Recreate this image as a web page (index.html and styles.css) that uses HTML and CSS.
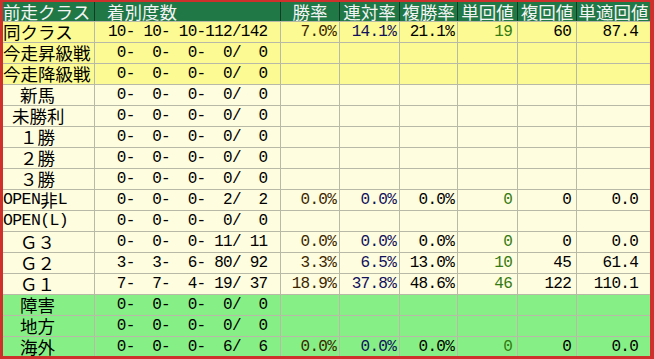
FILE: index.html
```html
<!DOCTYPE html>
<html lang="ja">
<head>
<meta charset="utf-8">
<title>前走クラス</title>
<link rel="stylesheet" href="styles.css">
</head>
<body>
<div class="frame">
  <div class="row head">
    <div class="cell lab jp">前走クラス</div>
    <div class="cell cnt jp">着別度数</div>
    <div class="cell hc jp">勝率</div>
    <div class="cell hc jp">連対率</div>
    <div class="cell hc jp">複勝率</div>
    <div class="cell hc jp">単回値</div>
    <div class="cell hc jp">複回値</div>
    <div class="cell hc jp">単適回値</div>
  </div>

  <div class="row yel">
    <div class="cell lab jp">同クラス</div>
    <div class="cell cnt num">10- 10- 10-112/142</div>
    <div class="cell pct c-win num">7.0%</div>
    <div class="cell pct c-ren num">14.1%</div>
    <div class="cell pct num">21.1%</div>
    <div class="cell rv c-tan num">19</div>
    <div class="cell rv num">60</div>
    <div class="cell rl num">87.4</div>
  </div>
  <div class="row yel">
    <div class="cell lab jp">今走昇級戦</div>
    <div class="cell cnt num"> 0-  0-  0-  0/  0</div>
    <div class="cell pct"></div><div class="cell pct"></div><div class="cell pct"></div>
    <div class="cell rv"></div><div class="cell rv"></div><div class="cell rl"></div>
  </div>
  <div class="row yel">
    <div class="cell lab jp">今走降級戦</div>
    <div class="cell cnt num"> 0-  0-  0-  0/  0</div>
    <div class="cell pct"></div><div class="cell pct"></div><div class="cell pct"></div>
    <div class="cell rv"></div><div class="cell rv"></div><div class="cell rl"></div>
  </div>

  <div class="row crm">
    <div class="cell lab jp ind-f">新馬</div>
    <div class="cell cnt num"> 0-  0-  0-  0/  0</div>
    <div class="cell pct"></div><div class="cell pct"></div><div class="cell pct"></div>
    <div class="cell rv"></div><div class="cell rv"></div><div class="cell rl"></div>
  </div>
  <div class="row crm">
    <div class="cell lab jp ind-h">未勝利</div>
    <div class="cell cnt num"> 0-  0-  0-  0/  0</div>
    <div class="cell pct"></div><div class="cell pct"></div><div class="cell pct"></div>
    <div class="cell rv"></div><div class="cell rv"></div><div class="cell rl"></div>
  </div>
  <div class="row crm">
    <div class="cell lab jp ind-f">１勝</div>
    <div class="cell cnt num"> 0-  0-  0-  0/  0</div>
    <div class="cell pct"></div><div class="cell pct"></div><div class="cell pct"></div>
    <div class="cell rv"></div><div class="cell rv"></div><div class="cell rl"></div>
  </div>
  <div class="row crm">
    <div class="cell lab jp ind-f">２勝</div>
    <div class="cell cnt num"> 0-  0-  0-  0/  0</div>
    <div class="cell pct"></div><div class="cell pct"></div><div class="cell pct"></div>
    <div class="cell rv"></div><div class="cell rv"></div><div class="cell rl"></div>
  </div>
  <div class="row crm">
    <div class="cell lab jp ind-f">３勝</div>
    <div class="cell cnt num"> 0-  0-  0-  0/  0</div>
    <div class="cell pct"></div><div class="cell pct"></div><div class="cell pct"></div>
    <div class="cell rv"></div><div class="cell rv"></div><div class="cell rl"></div>
  </div>
  <div class="row crm">
    <div class="cell lab jp"><span class="mono">OPEN</span>非<span class="mono">L</span></div>
    <div class="cell cnt num"> 0-  0-  0-  2/  2</div>
    <div class="cell pct c-win num">0.0%</div>
    <div class="cell pct c-ren num">0.0%</div>
    <div class="cell pct num">0.0%</div>
    <div class="cell rv c-tan num">0</div>
    <div class="cell rv num">0</div>
    <div class="cell rl num">0.0</div>
  </div>
  <div class="row crm">
    <div class="cell lab jp"><span class="mono">OPEN(L)</span></div>
    <div class="cell cnt num"> 0-  0-  0-  0/  0</div>
    <div class="cell pct"></div><div class="cell pct"></div><div class="cell pct"></div>
    <div class="cell rv"></div><div class="cell rv"></div><div class="cell rl"></div>
  </div>
  <div class="row crm">
    <div class="cell lab jp ind-f">Ｇ３</div>
    <div class="cell cnt num"> 0-  0-  0- 11/ 11</div>
    <div class="cell pct c-win num">0.0%</div>
    <div class="cell pct c-ren num">0.0%</div>
    <div class="cell pct num">0.0%</div>
    <div class="cell rv c-tan num">0</div>
    <div class="cell rv num">0</div>
    <div class="cell rl num">0.0</div>
  </div>
  <div class="row crm">
    <div class="cell lab jp ind-f">Ｇ２</div>
    <div class="cell cnt num"> 3-  3-  6- 80/ 92</div>
    <div class="cell pct c-win num">3.3%</div>
    <div class="cell pct c-ren num">6.5%</div>
    <div class="cell pct num">13.0%</div>
    <div class="cell rv c-tan num">10</div>
    <div class="cell rv num">45</div>
    <div class="cell rl num">61.4</div>
  </div>
  <div class="row crm">
    <div class="cell lab jp ind-f">Ｇ１</div>
    <div class="cell cnt num"> 7-  7-  4- 19/ 37</div>
    <div class="cell pct c-win num">18.9%</div>
    <div class="cell pct c-ren num">37.8%</div>
    <div class="cell pct num">48.6%</div>
    <div class="cell rv c-tan num">46</div>
    <div class="cell rv num">122</div>
    <div class="cell rl num">110.1</div>
  </div>

  <div class="row grn">
    <div class="cell lab jp ind-f">障害</div>
    <div class="cell cnt num"> 0-  0-  0-  0/  0</div>
    <div class="cell pct"></div><div class="cell pct"></div><div class="cell pct"></div>
    <div class="cell rv"></div><div class="cell rv"></div><div class="cell rl"></div>
  </div>
  <div class="row grn">
    <div class="cell lab jp ind-f">地方</div>
    <div class="cell cnt num"> 0-  0-  0-  0/  0</div>
    <div class="cell pct"></div><div class="cell pct"></div><div class="cell pct"></div>
    <div class="cell rv"></div><div class="cell rv"></div><div class="cell rl"></div>
  </div>
  <div class="row grn last">
    <div class="cell lab jp ind-f">海外</div>
    <div class="cell cnt num"> 0-  0-  0-  6/  6</div>
    <div class="cell pct c-win num">0.0%</div>
    <div class="cell pct c-ren num">0.0%</div>
    <div class="cell pct num">0.0%</div>
    <div class="cell rv c-tan num">0</div>
    <div class="cell rv num">0</div>
    <div class="cell rl num">0.0</div>
  </div>
</div>
</body>
</html>
```

FILE: styles.css
```css
html, body {
  margin: 0;
  padding: 0;
  background: #ffffff;
}

.frame {
  width: 654px;
  height: 359px;
  box-sizing: border-box;
  border-style: solid;
  border-color: #d0302c;
  border-width: 2px 4px 3px 3px;
  background: #fffde0;
  overflow: hidden;
}

.row {
  display: grid;
  grid-template-columns: 91px 186px 59px 60px 58px 60px 59px 74px;
  height: 21px;
  box-sizing: border-box;
  border-top: 1px solid #b9b9a8;
  color: #000;
}

.row.head {
  height: 19px;
  border-top: none;
  background: #1f7846;
  color: #f4f4f4;
}

.row.last {
  height: 20px;
}

.row.yel { background: #fcfa92; }
.row.crm { background: #fffddf; }
.row.grn { background: #86f086; }

.cell {
  display: flex;
  align-items: center;
  justify-content: flex-end;
  border-left: 1px solid #b9b9a8;
  white-space: pre;
  line-height: 20px;
}

.head .cell {
  line-height: 19px;
  border-left-color: #123c22;
}

.cell:first-child,
.head .cell:first-child {
  border-left: none;
}

.jp {
  font-family: "Noto Sans CJK JP", "Noto Sans CJK SC", sans-serif;
  font-size: 17.5px;
}

.num {
  font-family: "Liberation Mono", monospace;
  font-size: 16px;
  letter-spacing: -0.75px;
}

.mono {
  font-family: "Liberation Mono", monospace;
  font-size: 16.5px;
  letter-spacing: -0.6px;
}

.lab {
  justify-content: flex-start;
  padding-left: 0;
}

.ind-f { padding-left: 17px; }
.ind-h { padding-left: 9px; }

.cnt {
  justify-content: flex-start;
  padding-left: 13px;
}

.head .cnt {
  padding-left: 12px;
}

.hc {
  justify-content: center;
}

.pct { padding-right: 3px; }
.rv { padding-right: 5px; }
.rl { padding-right: 12px; }

.c-win { color: #3c2600; }
.c-ren { color: #10105c; }
.c-tan { color: #357a12; }
```
